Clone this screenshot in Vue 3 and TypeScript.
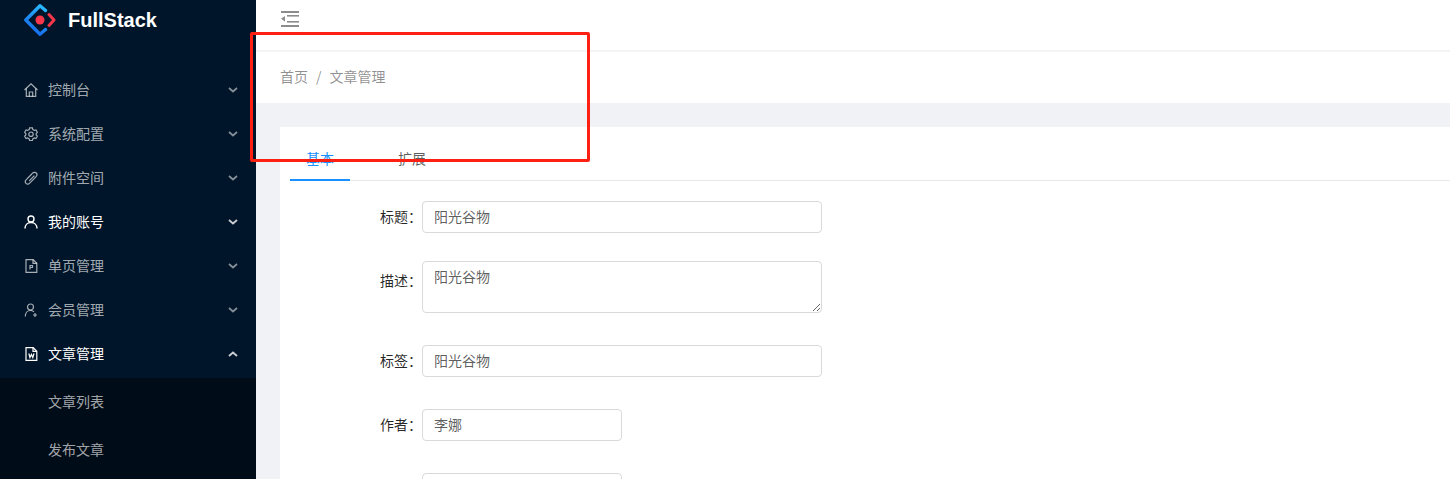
<script setup lang="ts">
interface MenuItem { label: string; icon: string; active?: boolean; open?: boolean }
const menu: MenuItem[] = [
  { label: '控制台', icon: 'home' },
  { label: '系统配置', icon: 'gear' },
  { label: '附件空间', icon: 'clip' },
  { label: '我的账号', icon: 'user', active: true },
  { label: '单页管理', icon: 'filep' },
  { label: '会员管理', icon: 'useradd' },
  { label: '文章管理', icon: 'filew', active: true, open: true },
]
const subs = ['文章列表', '发布文章']
</script>

<template>
  <div class="page">
    <aside class="side">
      <div class="logo">
        <svg class="logo-mark" width="32" height="32" viewBox="0 0 32 32">
          <defs>
            <linearGradient id="lg" x1="0.7" y1="0" x2="0.3" y2="1">
              <stop offset="0" stop-color="#29b6ff" />
              <stop offset="1" stop-color="#1565e8" />
            </linearGradient>
          </defs>
          <path d="M21.500 6.500 L16 1.800 L1.800 16 L16 30.200 L21.500 25.500" fill="none" stroke="url(#lg)" stroke-width="3.400" stroke-linejoin="round" stroke-linecap="round" />
          <path d="M25 10.500 L30 16 L25 21.500" fill="none" stroke="#f5364a" stroke-width="3" stroke-linejoin="round" stroke-linecap="round" />
          <circle cx="16" cy="16" r="4.500" fill="#f5364a" />
        </svg>
        <span class="logo-text">FullStack</span>
      </div>
      <ul class="menu">
        <li v-for="m in menu" :key="m.label" class="item" :class="{ active: m.active }">
          <svg class="ico" width="14" height="14" viewBox="0 0 14 14" fill="none" stroke="currentColor" stroke-width="1.200">
            <template v-if="m.icon === 'home'">
              <path d="M0.500 7 L7 0.800 L13.500 7" /><path d="M2.300 5.500 V13.400 H11.700 V5.500" /><path d="M5.300 13.400 V9 H8.700 V13.400" />
            </template>
            <template v-else-if="m.icon === 'gear'">
              <path d="M5.600 0.800 H8.400 L8.800 2.500 L10.400 3.400 L12 2.900 L13.400 5.300 L12.200 6.500 V8 L13.400 9.200 L12 11.600 L10.400 11 L8.800 11.900 L8.400 13.500 H5.600 L5.200 11.900 L3.600 11 L2 11.600 L0.600 9.200 L1.800 8 V6.500 L0.600 5.300 L2 2.900 L3.600 3.400 L5.200 2.500 Z" />
              <circle cx="7" cy="7.200" r="2.200" />
            </template>
            <template v-else-if="m.icon === 'clip'">
              <path d="M3.200 7.600 L8.300 2.400 C9.500 1.200 11.300 1 12.300 2 C13.300 3 13 4.700 11.900 5.900 L5.700 12.100 C4.600 13.200 3 13.400 2 12.400 C1 11.400 1.200 9.800 2.300 8.700 L7.800 3.200 M5.300 9.900 L10.400 4.700" />
            </template>
            <template v-else-if="m.icon === 'user'">
              <circle cx="7" cy="4" r="3" stroke-width="1.400" /><path d="M1 13.500 C1 10 3.500 7.500 7 7.500 C10.500 7.500 13 10 13 13.500" stroke-width="1.400" />
            </template>
            <template v-else-if="m.icon === 'useradd'">
              <circle cx="6.500" cy="4" r="3" /><path d="M1.300 13.500 C1.300 10 3.500 7.500 6.500 7.500 C7.900 7.500 9 8 10 8.800" /><path d="M11 10 V14 M9 12 H13" />
            </template>
            <template v-else>
              <path d="M2 0.700 H9.200 L12.800 4.200 V13.300 H2 Z" /><path d="M9 0.700 V4.400 H12.800" />
              <path v-if="m.icon === 'filep'" d="M6 10.500 V6.500 H8.500 V8.500 H6" />
              <path v-else d="M4.800 6.500 L6 10.500 L7.400 7.500 L8.800 10.500 L10 6.500" />
            </template>
          </svg>
          <span class="label">{{ m.label }}</span>
          <svg class="chev" width="10" height="6" viewBox="0 0 10 6" fill="none" stroke="currentColor" stroke-width="1.800">
            <path :d="m.open ? 'M1 5 L5 1.500 L9 5' : 'M1 1 L5 4.500 L9 1'" />
          </svg>
        </li>
        <li class="sub">
          <div v-for="s in subs" :key="s" class="sub-item">{{ s }}</div>
        </li>
      </ul>
    </aside>

    <main class="main">
      <header class="top">
        <svg width="18" height="16" viewBox="0 0 18 16" fill="#8c8c8c">
          <rect x="0" y="0" width="18" height="2" />
          <rect x="6" y="4" width="12" height="1.600" />
          <rect x="6" y="10" width="12" height="1.600" />
          <rect x="0" y="14" width="18" height="2" />
          <path d="M0 7.800 L4 5 V10.600 Z" />
        </svg>
      </header>
      <nav class="crumb">
        <span>首页</span><span class="slash">/</span><span>文章管理</span>
      </nav>
      <section class="body">
        <div class="card">
          <div class="tabs">
            <div class="tab on">基本</div>
            <div class="tab">扩展</div>
          </div>
          <form class="form" @submit.prevent>
            <div class="row tight">
              <label>标题：</label>
              <input class="field" value="阳光谷物" />
            </div>
            <div class="row">
              <label class="low">描述：</label>
              <textarea class="field area">阳光谷物</textarea>
            </div>
            <div class="row">
              <label>标签：</label>
              <input class="field" value="阳光谷物" />
            </div>
            <div class="row">
              <label>作者：</label>
              <input class="field short" value="李娜" />
            </div>
            <div class="row">
              <label></label>
              <input class="field short" />
            </div>
          </form>
        </div>
      </section>
    </main>

    <div class="mark"></div>
  </div>
</template>

<style>
html, body { margin: 0; height: 100%; overflow: hidden; background: #fff; }
</style>

<style scoped>
.page {
  position: relative;
  display: flex;
  width: 1450px;
  height: 479px;
  overflow: hidden;
  font-family: "Noto Sans CJK SC", "Liberation Sans", sans-serif;
  font-size: 14px;
}
.side {
  flex: 0 0 256px;
  background: #001529;
  color: rgba(255, 255, 255, 0.65);
}
.logo {
  display: flex;
  align-items: center;
  height: 40px;
  padding-left: 24px;
  gap: 12px;
  margin-bottom: 30px;
}
.logo-mark { flex: none; }
.logo-text {
  font-family: "Liberation Sans", Arial, sans-serif;
  font-size: 20px;
  font-weight: 700;
  color: #fff;
}
.menu { list-style: none; margin: 0; padding: 0; }
.item {
  display: flex;
  align-items: center;
  height: 40px;
  margin-bottom: 4px;
  padding: 0 18px 0 24px;
}
.item.active { color: #fff; }
.ico { flex: none; margin-right: 10px; }
.label { flex: 1; margin-bottom: 2px; }
.chev { flex: none; opacity: 0.8; }
.sub { background: #000c17; height: 101px; }
.sub-item {
  height: 40px;
  line-height: 38px;
  padding: 4px 0 4px 48px;
}
.main { flex: 1; min-width: 0; display: flex; flex-direction: column; }
.top {
  flex: none;
  height: 39px;
  padding: 11px 0 0 25px;
  border-bottom: 2px solid #f3f4f5;
}
.crumb {
  flex: none;
  height: 47px;
  padding: 0 0 4px 24px;
  display: flex;
  align-items: center;
  color: rgba(0, 0, 0, 0.45);
}
.slash { margin: 0 8px; }
.body {
  flex: 1;
  background: #f0f2f5;
  padding: 24px 0 0 24px;
}
.card { background: #fff; height: 400px; padding-left: 10px; }
.tabs {
  display: flex;
  height: 53px;
  border-bottom: 1px solid #e8e8e8;
}
.tab {
  width: 60px;
  margin-right: 32px;
  text-align: center;
  padding-top: 20px;
  box-sizing: border-box;
  color: rgba(0, 0, 0, 0.65);
  line-height: 22px;
}
.tab.on {
  color: #1890ff;
  height: 54px;
  border-bottom: 2px solid #1890ff;
}
.form { padding-top: 20px; }
.row { display: flex; margin-bottom: 32px; }
.row.tight { margin-bottom: 28px; }
label {
  width: 132px;
  flex: none;
  line-height: 30px;
  text-align: right;
  color: rgba(0, 0, 0, 0.85);
  white-space: nowrap;
}
label.low { padding-top: 4px; }
.field {
  display: block;
  box-sizing: border-box;
  width: 400px;
  height: 32px;
  padding: 3px 11px 5px;
  border: 1px solid #d9d9d9;
  border-radius: 4px;
  font: inherit;
  line-height: 22px;
  color: rgba(0, 0, 0, 0.65);
  background: #fff;
  outline: none;
  margin: 0;
}
.area { height: 52px; resize: vertical; }
.short { width: 200px; }
.mark {
  position: absolute;
  left: 250px;
  top: 32px;
  width: 340px;
  height: 130px;
  box-sizing: border-box;
  border: 3px solid #ff2014;
  border-radius: 2px;
  pointer-events: none;
}
</style>
